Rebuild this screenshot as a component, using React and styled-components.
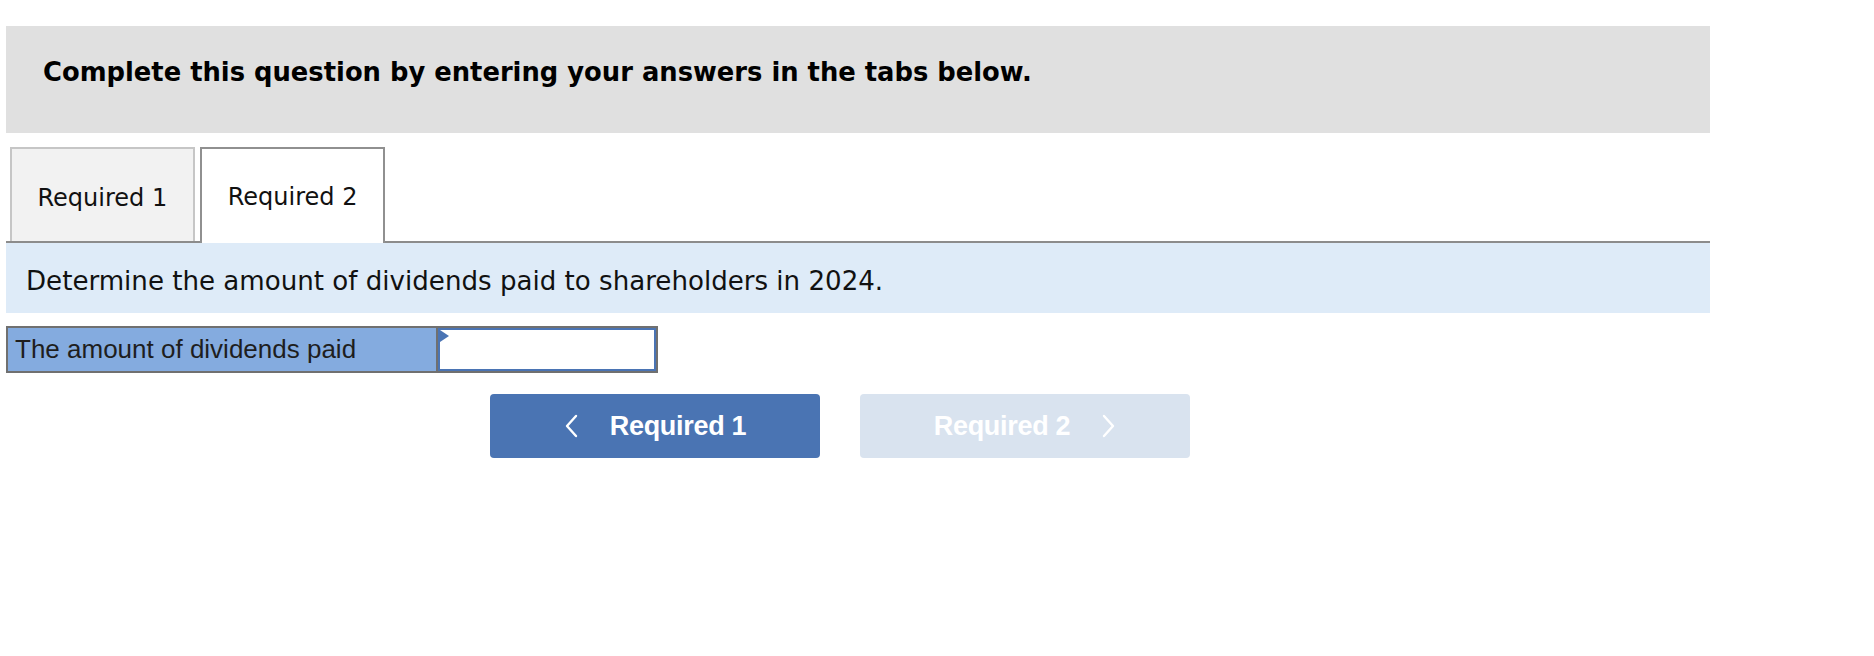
import React from "react";
import styled, { createGlobalStyle } from "styled-components";

const Global = createGlobalStyle`
  html, body { margin: 0; padding: 0; background: #ffffff; }
  body { font-family: "DejaVu Sans", Verdana, sans-serif; color: #000; }
`;

const Page = styled.div`
  width: 1704px;
  margin-left: 6px;
  padding-top: 26px;
  display: flex;
  flex-direction: column;
`;

const Instructions = styled.div`
  height: 107px;
  box-sizing: border-box;
  background: #e0e0e0;
  padding: 31px 0 0 37px;
  font-family: "DejaVu Sans", Verdana, sans-serif;
  font-weight: bold;
  font-size: 25.8px;
  line-height: 30px;
  color: #000;
`;

const TabBar = styled.div`
  margin-top: 14px;
  display: flex;
  gap: 5px;
  padding-left: 4px;
  border-bottom: 2px solid #8c8c8c;
  height: 96px;
  box-sizing: border-box;
`;

const Tab = styled.div`
  box-sizing: border-box;
  height: ${(p) => (p.$active ? "96px" : "94px")};
  padding: ${(p) => (p.$active ? "2px 26px 0" : "6px 25.5px 0")};
  display: flex;
  align-items: center;
  justify-content: center;
  font-family: "DejaVu Sans", Verdana, sans-serif;
  font-size: 24px;
  color: #111;
  background: ${(p) => (p.$active ? "#ffffff" : "#f2f2f2")};
  border: 2px solid ${(p) => (p.$active ? "#909090" : "#c6c6c6")};
  border-bottom: none;
  position: relative;
  z-index: 1;
`;

const Prompt = styled.div`
  height: 70px;
  box-sizing: border-box;
  background: #deebf8;
  display: flex;
  align-items: center;
  padding: 5px 0 0 20px;
  font-family: "DejaVu Sans", Verdana, sans-serif;
  font-size: 26.1px;
  color: #111;
`;

const AnswerRow = styled.div`
  margin-top: 13px;
  display: flex;
  width: 652px;
  height: 47px;
  box-sizing: border-box;
  border: 2px solid #707070;
`;

const LabelCell = styled.div`
  width: 430px;
  box-sizing: border-box;
  background: #84abdf;
  border-right: 2px solid #707070;
  display: flex;
  align-items: center;
  padding-left: 7px;
  font-family: "Liberation Sans", Arial, sans-serif;
  font-size: 26px;
  color: #1e1e1e;
`;

const InputCell = styled.div`
  flex: 1;
  position: relative;
  display: flex;
`;

const AmountInput = styled.input`
  flex: 1;
  width: 100%;
  box-sizing: border-box;
  border: 2px solid #4a74b4;
  background: #ffffff;
  outline: none;
  margin: 0;
  padding: 0 8px;
  font-family: "Liberation Sans", Arial, sans-serif;
  font-size: 22px;
`;

const Marker = styled.span`
  position: absolute;
  left: 2px;
  top: 2px;
  width: 0;
  height: 0;
  border-top: 6px solid transparent;
  border-bottom: 6px solid transparent;
  border-left: 9px solid #4a74b4;
`;

const NavBar = styled.div`
  margin-top: 21px;
  display: flex;
  gap: 40px;
  padding-left: 484px;
`;

const NavButton = styled.button`
  width: 330px;
  height: 64px;
  border: none;
  border-radius: 4px;
  background: ${(p) => (p.$disabled ? "#d9e3ef" : "#4a74b3")};
  color: #ffffff;
  display: flex;
  align-items: center;
  justify-content: center;
  gap: 32px;
  padding: 0;
  font-family: "Liberation Sans", Arial, sans-serif;
  font-weight: bold;
  font-size: 27px;
  letter-spacing: -0.3px;
  cursor: ${(p) => (p.$disabled ? "default" : "pointer")};
`;

const Chevron = ({ dir }) => (
  <svg width="14" height="24" viewBox="0 0 14 24" fill="none">
    <polyline
      points={dir === "left" ? "12,2 3,12 12,22" : "2,2 11,12 2,22"}
      stroke="#ffffff"
      strokeWidth="2.4"
      strokeLinecap="round"
      strokeLinejoin="round"
    />
  </svg>
);

export default function App() {
  return (
    <>
      <Global />
      <Page>
        <Instructions>Complete this question by entering your answers in the tabs below.</Instructions>
        <TabBar>
          <Tab>Required 1</Tab>
          <Tab $active>Required 2</Tab>
        </TabBar>
        <Prompt>Determine the amount of dividends paid to shareholders in 2024.</Prompt>
        <AnswerRow>
          <LabelCell>The amount of dividends paid</LabelCell>
          <InputCell>
            <AmountInput type="text" aria-label="The amount of dividends paid" />
            <Marker />
          </InputCell>
        </AnswerRow>
        <NavBar>
          <NavButton>
            <Chevron dir="left" />
            <span>Required 1</span>
          </NavButton>
          <NavButton $disabled>
            <span>Required 2</span>
            <Chevron dir="right" />
          </NavButton>
        </NavBar>
      </Page>
    </>
  );
}
